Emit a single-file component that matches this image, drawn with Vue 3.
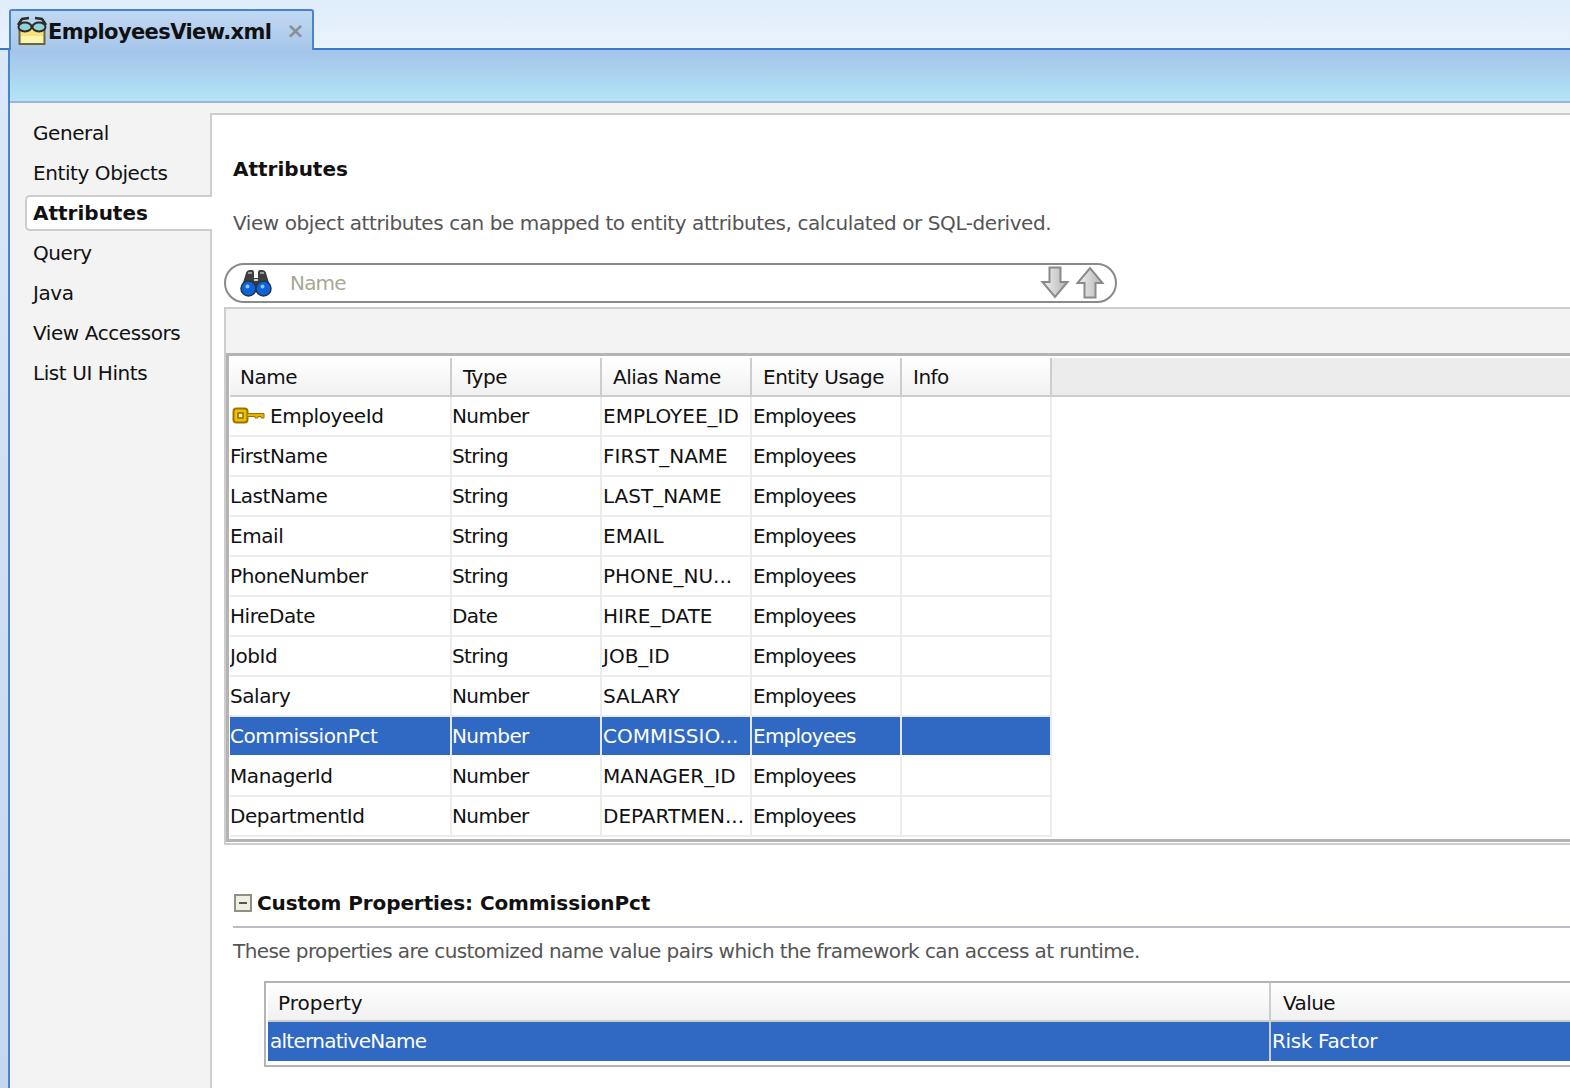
<template>
  <div class="page">
    <!-- Barra de pestañas -->
    <div class="tabbar">
      <div class="tab">
        <svg class="file-icon" width="32" height="30" viewBox="0 0 32 30">
          <rect x="3.5" y="10" width="25" height="18" fill="#f6e27a" stroke="#6b6540" stroke-width="2" />
          <rect x="5" y="20" width="22" height="7" fill="#fbf3b0" />
          <path d="M2 9 L6 3 L13 2 M30 9 L26 3 L19 2" fill="none" stroke="#2c2c2c" stroke-width="2.5" />
          <ellipse cx="9" cy="11" rx="6.5" ry="4.5" fill="#8fd3d8" stroke="#2c2c2c" stroke-width="2" />
          <ellipse cx="23" cy="11" rx="6.5" ry="4.5" fill="#8fd3d8" stroke="#2c2c2c" stroke-width="2" />
          <path d="M15 10 h2" stroke="#2c2c2c" stroke-width="2.5" />
        </svg>
        <span class="tab-title">EmployeesView.xml</span>
        <span class="tab-close">×</span>
      </div>
    </div>

    <div class="editor">
      <div class="banner"></div>

      <div class="workspace">
        <!-- Navegación lateral -->
        <nav class="sidenav">
          <div
            v-for="item in navItems"
            :key="item"
            class="nav-item"
            :class="{ active: item === 'Attributes' }"
          >
            {{ item }}
          </div>
        </nav>

        <main class="content">
          <h2 class="title">Attributes</h2>
          <p class="desc">View object attributes can be mapped to entity attributes, calculated or SQL-derived.</p>

          <!-- Buscador -->
          <div class="search">
            <svg class="binoculars" width="34" height="30" viewBox="0 0 34 30">
              <path d="M3 18 L7 5 Q8 2 11 2 H13 Q15 2 15 5 V10 H19 V5 Q19 2 21 2 H23 Q26 2 27 5 L31 18 Z" fill="#3d3d3d" />
              <path d="M9 5 H13 M21 5 H25" stroke="#9a9a9a" stroke-width="2" />
              <path d="M15 12 h4" stroke="#d0d0d0" stroke-width="2" />
              <circle cx="9.5" cy="20.5" r="7.5" fill="#0f63d8" stroke="#24344e" stroke-width="1.5" />
              <circle cx="24.5" cy="20.5" r="7.5" fill="#0f63d8" stroke="#24344e" stroke-width="1.5" />
              <circle cx="8.5" cy="18.5" r="2" fill="#8cc4ff" />
              <circle cx="23.5" cy="18.5" r="2" fill="#8cc4ff" />
            </svg>
            <span class="search-text">Name</span>
            <svg class="arrow" width="30" height="34" viewBox="0 0 30 34">
              <defs>
                <linearGradient id="arrowFill" x1="0" y1="0" x2="1" y2="0">
                  <stop offset="0" stop-color="#f2f2f2" />
                  <stop offset="1" stop-color="#b4b4b4" />
                </linearGradient>
              </defs>
              <path d="M9.5 1.5 H20.5 V16 H27.5 L15 31 L2.5 16 H9.5 Z" fill="url(#arrowFill)" stroke="#8a8a8a" stroke-width="2" />
            </svg>
            <svg class="arrow" width="30" height="34" viewBox="0 0 30 34">
              <path d="M9.5 31.5 H20.5 V17 H27.5 L15 2 L2.5 17 H9.5 Z" fill="url(#arrowFill)" stroke="#8a8a8a" stroke-width="2" />
            </svg>
          </div>

          <!-- Tabla de atributos -->
          <div class="table-panel">
            <div class="panel-toolbar"></div>
            <div class="attr-table">
              <div class="attr-head">
                <div v-for="col in columns" :key="col" class="head-cell">{{ col }}</div>
                <div class="head-rest"></div>
              </div>
              <div
                v-for="row in rows"
                :key="row.name"
                class="attr-row"
                :class="{ selected: row.name === selected }"
              >
                <div class="cell">
                  <svg v-if="row.key" class="key" width="34" height="20" viewBox="0 0 34 20">
                    <rect x="1.5" y="2.5" width="14" height="14" rx="3" fill="#f0c000" stroke="#9a7400" stroke-width="2" />
                    <rect x="6" y="7" width="5" height="5" fill="#fff6b0" stroke="#8a6a00" stroke-width="1.5" />
                    <path d="M15 7.5 H32 V12 H29 V10.5 H26 V12 H23 V10.5 H15 Z" fill="#e8b400" stroke="#9a7400" stroke-width="1" />
                  </svg>
                  <span :class="{ 'key-name': row.key }">{{ row.name }}</span>
                </div>
                <div class="cell type">{{ row.type }}</div>
                <div class="cell alias">{{ row.alias }}</div>
                <div class="cell usage">{{ row.usage }}</div>
                <div class="cell"></div>
              </div>
            </div>
          </div>

          <!-- Propiedades personalizadas -->
          <div class="section-head">
            <span class="toggle"></span>
            <span class="section-title">Custom Properties: {{ selected }}</span>
          </div>
          <p class="section-desc">These properties are customized name value pairs which the framework can access at runtime.</p>

          <div class="prop-table">
            <div class="prop-head">
              <div class="prop-col-a">Property</div>
              <div class="prop-col-b">Value</div>
            </div>
            <div class="prop-row">
              <div class="prop-col-a">alternativeName</div>
              <div class="prop-col-b">Risk Factor</div>
            </div>
          </div>
        </main>
      </div>
    </div>
  </div>
</template>

<script setup>
const navItems = ['General', 'Entity Objects', 'Attributes', 'Query', 'Java', 'View Accessors', 'List UI Hints']
const columns = ['Name', 'Type', 'Alias Name', 'Entity Usage', 'Info']
const selected = 'CommissionPct'

const rows = [
  { name: 'EmployeeId', type: 'Number', alias: 'EMPLOYEE_ID', usage: 'Employees', key: true },
  { name: 'FirstName', type: 'String', alias: 'FIRST_NAME', usage: 'Employees' },
  { name: 'LastName', type: 'String', alias: 'LAST_NAME', usage: 'Employees' },
  { name: 'Email', type: 'String', alias: 'EMAIL', usage: 'Employees' },
  { name: 'PhoneNumber', type: 'String', alias: 'PHONE_NU...', usage: 'Employees' },
  { name: 'HireDate', type: 'Date', alias: 'HIRE_DATE', usage: 'Employees' },
  { name: 'JobId', type: 'String', alias: 'JOB_ID', usage: 'Employees' },
  { name: 'Salary', type: 'Number', alias: 'SALARY', usage: 'Employees' },
  { name: 'CommissionPct', type: 'Number', alias: 'COMMISSIO...', usage: 'Employees' },
  { name: 'ManagerId', type: 'Number', alias: 'MANAGER_ID', usage: 'Employees' },
  { name: 'DepartmentId', type: 'Number', alias: 'DEPARTMEN...', usage: 'Employees' }
]
</script>

<style>
html, body {
  margin: 0;
  background: #fff;
}
</style>

<style scoped>
.page {
  width: 1570px;
  height: 1088px;
  overflow: hidden;
  font-family: "DejaVu Sans", sans-serif;
  font-size: 20px;
  letter-spacing: -0.42px;
  color: #111;
  background: linear-gradient(#dbe9f9, #c3d7ee);
}

.tabbar {
  box-sizing: border-box;
  height: 50px;
  padding: 9px 0 0 9px;
  background: linear-gradient(#dfecfa, #ebf3fc);
  border-bottom: 2px solid #3a78c9;
}

.tab {
  box-sizing: border-box;
  width: 305px;
  height: 41px;
  display: flex;
  align-items: center;
  padding-left: 5px;
  background: linear-gradient(#c2d8f2, #a5c6ea);
  border: 2px solid #4a83cf;
  border-bottom: none;
  border-radius: 3px 3px 0 0;
}

.file-icon {
  flex: none;
}

.tab-title {
  font-weight: bold;
  font-size: 21px;
  margin: 2px 0 0 0;
  letter-spacing: -0.6px;
}

.tab-close {
  margin-left: 15px;
  font-size: 22px;
  font-weight: bold;
  color: #8a8f96;
}

.editor {
  margin-left: 8px;
  height: 1038px;
  border-left: 2px solid #4a83cf;
  display: flex;
  flex-direction: column;
}

.banner {
  flex: none;
  height: 51px;
  background: linear-gradient(#a2c4ea, #b4e4f6);
  border-bottom: 2px solid #93b8dc;
}

.workspace {
  flex: 1;
  display: flex;
  min-height: 0;
  background: #f3f3f3;
}

.sidenav {
  flex: none;
  width: 200px;
  padding-top: 10px;
}

.nav-item {
  box-sizing: border-box;
  height: 40px;
  line-height: 40px;
  padding-left: 23px;
}

.nav-item.active {
  position: relative;
  z-index: 1;
  height: 36px;
  margin: 2px -2px 2px 15px;
  line-height: 32px;
  padding-left: 6px;
  font-weight: bold;
  letter-spacing: 0;
  background: #fff;
  border: 2px solid #cdcdcd;
  border-right: none;
  border-radius: 5px 0 0 5px;
}

.content {
  flex: 1;
  min-width: 0;
  margin-top: 10px;
  padding-left: 12px;
  background: #fff;
  border-left: 2px solid #cdcdcd;
  border-top: 2px solid #cdcdcd;
}

.title {
  margin: 0 0 0 9px;
  padding-top: 42px;
  height: 24px;
  line-height: 24px;
  font-size: 20px;
  letter-spacing: 0;
}

.desc {
  margin: 30px 0 0 9px;
  height: 24px;
  line-height: 24px;
  color: #555;
}

.search {
  box-sizing: border-box;
  width: 893px;
  height: 40px;
  margin-top: 28px;
  display: flex;
  align-items: center;
  padding-left: 13px;
  border: 2px solid #8a8a8a;
  border-radius: 20px;
}

.search-text {
  flex: 1;
  margin-left: 17px;
  letter-spacing: -0.8px;
  color: #a8a895;
}

.arrow {
  flex: none;
  width: 30px;
  height: 34px;
}

.arrow:last-child {
  margin: 0 10px 0 5px;
}

.table-panel {
  box-sizing: border-box;
  height: 538px;
  margin-top: 4px;
  border: 2px solid #cdcdcd;
  border-right: none;
}

.panel-toolbar {
  height: 44px;
  background: #f3f3f3;
}

.attr-table {
  box-sizing: border-box;
  height: 489px;
  padding: 2px 0 2px 1px;
  border: 3px solid #b4b4b4;
  border-right: none;
}

.attr-head {
  display: flex;
  height: 37px;
  border-bottom: 2px solid #cdcdcd;
}

.head-cell {
  box-sizing: border-box;
  width: 150px;
  padding-left: 11px;
  line-height: 38px;
  letter-spacing: -0.5px;
  background: linear-gradient(#fff, #f1f1f1);
  border-right: 2px solid #cdcdcd;
}

.head-cell:first-child {
  width: 222px;
  padding-left: 10px;
}

.head-rest {
  flex: 1;
  background: #ececec;
}

.attr-row {
  display: flex;
  height: 40px;
}

.cell {
  box-sizing: border-box;
  width: 150px;
  height: 40px;
  padding-left: 1px;
  display: flex;
  align-items: center;
  white-space: nowrap;
  overflow: hidden;
  border-right: 2px solid #ececec;
  border-bottom: 2px solid #ececec;
}

.cell:first-child {
  width: 222px;
  padding-left: 0;
}

.cell.type {
  padding-left: 0;
  letter-spacing: -0.6px;
}

.cell.alias {
  letter-spacing: 0;
}

.cell.usage {
  letter-spacing: -0.75px;
}

.key {
  flex: none;
  margin-left: 2px;
}

.key-name {
  margin-left: 4px;
}

.attr-row.selected .cell {
  color: #fff;
  background: #3069c4;
  border-bottom-color: #fff;
}

.attr-row.selected .cell:not(:last-child) {
  border-right-color: #e6e6e6;
}

.section-head {
  display: flex;
  align-items: center;
  height: 32px;
  margin: 42px 0 0 9px;
  padding-bottom: 7px;
  border-bottom: 2px solid #b9bdc4;
}

.toggle {
  position: relative;
  flex: none;
  box-sizing: border-box;
  width: 18px;
  height: 18px;
  margin: 0 5px 0 1px;
  background: #eeeee2;
  border: 2px solid #8f8f84;
}

.toggle::after {
  content: "";
  position: absolute;
  left: 3px;
  right: 3px;
  top: 6px;
  height: 2px;
  background: #555;
}

.section-title {
  font-weight: bold;
  letter-spacing: -0.1px;
}

.section-desc {
  margin: 11px 0 0 9px;
  height: 24px;
  line-height: 24px;
  letter-spacing: -0.58px;
  color: #555;
}

.prop-table {
  box-sizing: border-box;
  height: 86px;
  margin: 18px 0 0 40px;
  border: 2px solid #b4b4b4;
  border-right: none;
  padding-left: 2px;
}

.prop-head,
.prop-row {
  display: flex;
}

.prop-head {
  height: 37px;
  line-height: 40px;
  background: linear-gradient(#fff, #f1f1f1);
  border-bottom: 2px solid #cdcdcd;
}

.prop-row {
  height: 39px;
  line-height: 38px;
  color: #fff;
  background: #3069c4;
}

.prop-col-a {
  box-sizing: border-box;
  width: 1003px;
  padding-left: 10px;
  letter-spacing: 0;
  border-right: 2px solid #cdcdcd;
}

.prop-col-b {
  flex: 1;
  padding-left: 12px;
  letter-spacing: -0.6px;
}

.prop-row .prop-col-a {
  padding-left: 2px;
  letter-spacing: -0.73px;
}

.prop-row .prop-col-b {
  padding-left: 1px;
  letter-spacing: -0.35px;
}
</style>
